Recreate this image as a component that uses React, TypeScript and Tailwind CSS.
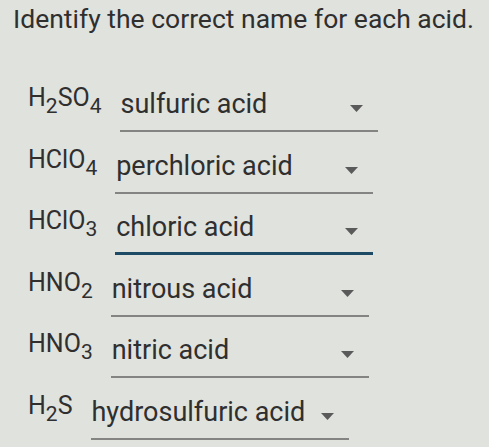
const rows: { parts: [string, string][]; name: string; active?: boolean }[] = [
  { parts: [['H', '2'], ['SO', '4']], name: 'sulfuric acid' },
  { parts: [['HClO', '4']], name: 'perchloric acid' },
  { parts: [['HClO', '3']], name: 'chloric acid', active: true },
  { parts: [['HNO', '2']], name: 'nitrous acid' },
  { parts: [['HNO', '3']], name: 'nitric acid' },
  { parts: [['H', '2'], ['S', '']], name: 'hydrosulfuric acid' },
]

function Formula({ parts }: { parts: [string, string][] }) {
  return (
    <span className="relative -top-[7px] whitespace-nowrap text-[25px]">
      {parts.map(([el, n], i) => (
        <span key={i}>
          {el}
          {n && <span className="relative top-[7px] text-[21px]">{n}</span>}
        </span>
      ))}
    </span>
  )
}

export default function App() {
  return (
    <div className="w-[489px] h-[447px] overflow-hidden bg-[#e0e2de] text-[#2f2f2f] font-['Roboto',sans-serif]">
      <h1 className="pl-[13px] pt-[3px] text-[26.5px] leading-[32px]">Identify the correct name for each acid.</h1>

      <div className="mt-[50px] pl-[28px] flex flex-col gap-[14.6px]">
        {rows.map((r) => (
          <div key={r.name} className="flex items-baseline">
            <Formula parts={r.parts} />
            <div
              className={`ml-[18px] w-[258px] flex items-center justify-between pl-[1px] pr-[15px] pt-[4px] ${
                r.active ? 'pb-[10px] border-b-[3px] border-[#1d4b66]' : 'pb-[11px] border-b-2 border-[#848582]'
              }`}
            >
              <span className="text-[27px] leading-[30px]">{r.name}</span>
              <svg width="13" height="7" viewBox="0 0 13 7" className="mt-[9px]">
                <path d="M0 0 L13 0 L6.5 7 Z" fill="#5a5a5a" />
              </svg>
            </div>
          </div>
        ))}
      </div>
    </div>
  )
}
